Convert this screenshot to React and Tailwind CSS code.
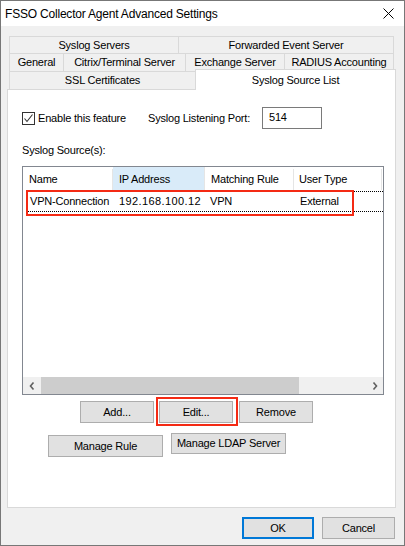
import React from 'react';

const tabBase = "box-border h-full flex items-center justify-center border-t border-l border-[#d9d9d9] bg-[#f0f0f0] text-black";

function Chevron({ dir }) {
  return (
    <svg width="6" height="8" viewBox="0 0 6 8">
      {dir === 'left'
        ? <polyline points="4.5,0.5 1.5,4 4.5,7.5" fill="none" stroke="#606060" strokeWidth="1.6" />
        : <polyline points="1.5,0.5 4.5,4 1.5,7.5" fill="none" stroke="#606060" strokeWidth="1.6" />}
    </svg>
  );
}

function Btn({ children, className = '' }) {
  return (
    <div className={`box-border flex items-center justify-center bg-[#e1e1e1] border border-[#adadad] ${className}`}>
      {children}
    </div>
  );
}

export default function App() {
  return (
    <div className="box-border w-[405px] h-[546px] flex flex-col bg-[#f0f0f0] border border-[#777777] font-['Liberation_Sans',Arial,sans-serif] text-[11px] tracking-[-0.2px] text-black overflow-hidden">
      {/* title bar */}
      <div className="h-[25px] shrink-0 bg-white flex items-center justify-between pl-[4px] pr-[10px]">
        <span className="text-[12px]">FSSO Collector Agent Advanced Settings</span>
        <svg width="11" height="11" viewBox="0 0 11 11">
          <line x1="0.5" y1="0.5" x2="10.5" y2="10.5" stroke="#000" strokeWidth="1" />
          <line x1="10.5" y1="0.5" x2="0.5" y2="10.5" stroke="#000" strokeWidth="1" />
        </svg>
      </div>

      {/* tabs */}
      <div className="mt-[10px] ml-[8px] flex flex-col">
        <div className="flex h-[17px]">
          <div className={`${tabBase} w-[169px]`}>Syslog Servers</div>
          <div className={`${tabBase} w-[216px] border-r`}>Forwarded Event Server</div>
        </div>
        <div className="flex h-[18px]">
          <div className={`${tabBase} w-[54px]`}>General</div>
          <div className={`${tabBase} w-[122px]`}>Citrix/Terminal Server</div>
          <div className={`${tabBase} w-[99px]`}>Exchange Server</div>
          <div className={`${tabBase} w-[110px] border-r`}>RADIUS Accounting</div>
        </div>
        <div className="flex h-[18px] items-end">
          <div className={`${tabBase} w-[186px]`}>SSL Certificates</div>
          <div className="relative z-10 box-border h-[21px] w-[201px] -mb-px bg-white border-t border-x border-[#d9d9d9] flex items-start justify-center pt-[2px]">
            Syslog Source List
          </div>
        </div>
      </div>

      {/* panel */}
      <div className="box-border ml-[6px] w-[389px] h-[419px] bg-white border border-[#d9d9d9] flex flex-col">
        <div className="mt-[17px] ml-[14px] flex items-center h-[22px]">
          <div className="w-[126px] flex items-center">
            <div className="box-border w-[13px] h-[13px] border border-[#333333] flex items-center justify-center">
              <svg width="11" height="11" viewBox="0 0 11 11">
                <polyline points="1.5,5.5 4,8.5 9.5,1.5" fill="none" stroke="#333333" strokeWidth="1.1" />
              </svg>
            </div>
            <span className="ml-[3px]">Enable this feature</span>
          </div>
          <span className="w-[114px]">Syslog Listening Port:</span>
          <div className="box-border w-[60px] h-[22px] border border-[#7a7a7a] flex items-center pl-[6px] pb-[2px]">514</div>
        </div>

        <div className="mt-[13px] ml-[14px] h-[16px] flex items-center">Syslog Source(s):</div>

        {/* list view */}
        <div className="relative box-border mt-[8px] ml-[14px] w-[362px] h-[229px] border border-[#828790] bg-white flex flex-col">
          <div className="flex h-[23px] shrink-0 pt-[2px]">
            <div className="box-border w-[90px] border-r border-[#e5e5e5] flex items-center pl-[6px]">Name</div>
            <div className="box-border w-[92px] border-r border-[#e5e5e5] bg-[#d9ebf9] -mt-[2px] flex items-center pl-[6px] pt-[2px]">IP Address</div>
            <div className="box-border w-[89px] border-r border-[#e5e5e5] flex items-center pl-[6px]">Matching Rule</div>
            <div className="box-border w-[88px] border-r border-[#e5e5e5] flex items-center pl-[5px]">User Type</div>
          </div>
          <div className="box-border mt-px ml-[4px] h-[21px] border border-r-0 border-dotted border-black flex items-center">
            <div className="w-[85px] pl-[2px]">VPN-Connection</div>
            <div className="w-[92px] pl-[6px] tracking-[0.4px]">192.168.100.12</div>
            <div className="w-[89px] pl-[5px]">VPN</div>
            <div className="pl-[6px]">External</div>
          </div>
          <div className="flex-1" />
          <div className="h-[17px] shrink-0 bg-[#f0f0f0] flex items-center">
            <div className="w-[18px] h-full flex items-center justify-center"><Chevron dir="left" /></div>
            <div className="w-[258px] h-full bg-[#cdcdcd]" />
            <div className="flex-1" />
            <div className="w-[17px] h-full flex items-center justify-center"><Chevron dir="right" /></div>
          </div>
          <div className="absolute left-[3px] top-[23px] w-[328px] h-[26px] border-2 border-[#f42a14]" />
        </div>

        {/* buttons */}
        <div className="mt-[6px] ml-[72px] flex">
          <Btn className="w-[74px] h-[22px]">Add...</Btn>
          <div className="relative ml-[5px]">
            <Btn className="w-[74px] h-[22px]">Edit...</Btn>
            <div className="absolute left-[-3px] top-[-4px] w-[82px] h-[29px] border-2 border-[#f42a14]" />
          </div>
          <Btn className="ml-[6px] w-[74px] h-[22px]">Remove</Btn>
        </div>
        <div className="mt-[10px] ml-[40px] flex items-start">
          <Btn className="mt-[2px] w-[115px] h-[22px]">Manage Rule</Btn>
          <Btn className="ml-[8px] w-[115px] h-[21px]">Manage LDAP Server</Btn>
        </div>
      </div>

      {/* dialog buttons */}
      <div className="mt-[9px] pr-[9px] flex justify-end">
        <div className="box-border w-[72px] h-[22px] bg-[#e1e1e1] border-2 border-[#0078d7] flex items-center justify-center">OK</div>
        <Btn className="ml-[8px] w-[73px] h-[22px]">Cancel</Btn>
      </div>
    </div>
  );
}
